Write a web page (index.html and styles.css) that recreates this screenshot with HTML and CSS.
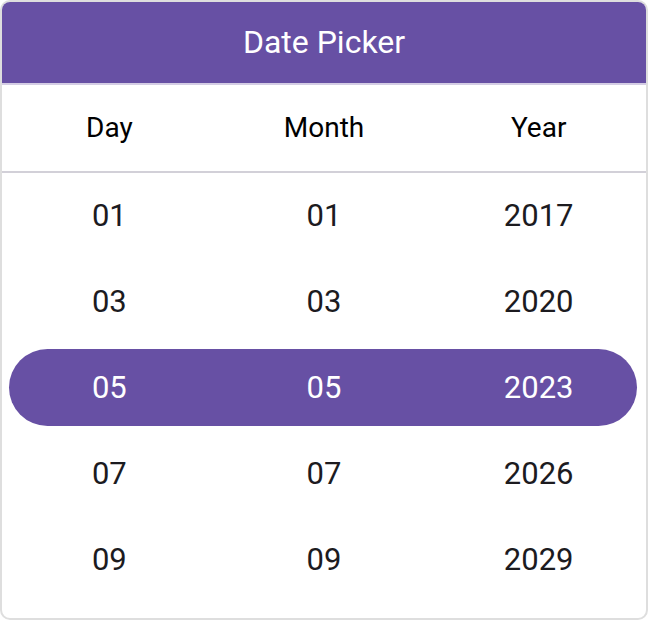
FILE: index.html
```html
<!DOCTYPE html>
<html lang="en">

<head>
    <meta charset="UTF-8">
    <meta name="viewport" content="width=device-width, initial-scale=1.0">
    <title>Date Picker</title>
    <link rel="stylesheet" href="styles.css">
</head>

<body>
    <div class="picker">
        <div class="picker-header">Date Picker</div>
        <div class="columns labels">
            <div>Day</div>
            <div>Month</div>
            <div>Year</div>
        </div>
        <div class="list">
            <div class="columns row">
                <div>01</div>
                <div>01</div>
                <div>2017</div>
            </div>
            <div class="columns row">
                <div>03</div>
                <div>03</div>
                <div>2020</div>
            </div>
            <div class="columns row selected">
                <div>05</div>
                <div>05</div>
                <div>2023</div>
            </div>
            <div class="columns row">
                <div>07</div>
                <div>07</div>
                <div>2026</div>
            </div>
            <div class="columns row">
                <div>09</div>
                <div>09</div>
                <div>2029</div>
            </div>
        </div>
    </div>
</body>

</html>
```

FILE: styles.css
```css
body {
    font-family: Roboto, "Liberation Sans", sans-serif;
    margin: 0;
    padding: 0;
    background-color: #ffffff;
}

.picker {
    box-sizing: border-box;
    width: 648px;
    height: 620px;
    border: 2px solid #dedede;
    border-radius: 10px;
    overflow: hidden;
    background-color: #ffffff;
}

.picker-header {
    height: 81px;
    line-height: 81px;
    background-color: #6750a4;
    color: #ffffff;
    text-align: center;
    font-size: 32px;
    border-bottom: 2px solid #d4cde4;
}

.columns {
    display: grid;
    grid-template-columns: 1fr 1fr 1fr;
    text-align: center;
}

.labels {
    height: 86px;
    line-height: 86px;
    font-size: 28px;
    color: #000000;
    border-bottom: 2px solid #d2d0d8;
}

.row {
    position: relative;
    height: 86px;
    line-height: 86px;
    font-size: 31px;
    color: #1c1b1f;
}

.row > div {
    position: relative;
}

.selected {
    color: #ffffff;
}

.selected::before {
    content: "";
    position: absolute;
    top: 4px;
    bottom: 5px;
    left: 7px;
    right: 9px;
    border-radius: 40px;
    background-color: #6750a4;
}
```
